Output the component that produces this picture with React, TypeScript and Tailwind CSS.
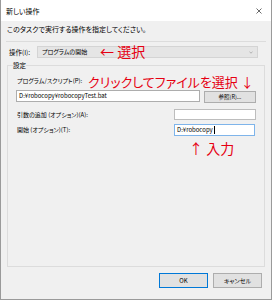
import React from 'react';

const font = "font-['Noto_Sans_CJK_JP','Noto_Sans',sans-serif] [font-feature-settings:'palt']";

const App: React.FC = () => {
  return (
    <div className={`relative w-[272px] h-[300px] bg-[#f0f0f0] border-x border-b border-[#9a9a9a] flex flex-col text-black ${font}`}>
      {/* title bar */}
      <div className="h-[21px] bg-white flex items-center justify-between pl-[5px] pr-[9px] shrink-0">
        <span className="text-[7px] leading-[10px]">新しい操作</span>
        <svg width="6" height="6" viewBox="0 0 6 6" className="text-[#444]">
          <path d="M0.5 0.5 L5.5 5.5 M5.5 0.5 L0.5 5.5" stroke="currentColor" strokeWidth="0.8" />
        </svg>
      </div>

      <p className="pt-[3px] pl-[6px] text-[7px] leading-[10px]">このタスクで実行する操作を指定してください。</p>
      <div className="mt-[7px] mx-[5px] h-px bg-[#dcdcdc]" />

      {/* action row */}
      <div className="mt-[4px] flex items-center pl-[8px] pr-[13px]">
        <span className="w-[28px] text-[6.5px] leading-[10px]">操作(I):</span>
        <div className="flex-1 h-[12px] bg-[#e5e5e5] border border-[#d4d4d4] flex items-center justify-between pl-[4px] pr-[4px]">
          <span className="text-[6px] leading-[10px]">プログラムの開始</span>
          <svg width="4" height="3" viewBox="0 0 4 3">
            <path d="M0.5 0.8 L2 2.2 L3.5 0.8" stroke="#9a9a9a" strokeWidth="0.7" fill="none" />
          </svg>
        </div>
      </div>

      {/* settings group */}
      <fieldset className="mt-[2px] mx-[6px] h-[207px] border border-[#dcdcdc] shrink-0">
        <legend className="ml-[5px] text-[6.5px] leading-[10px]">設定</legend>

        <div className="mt-[6px] pl-[9px] text-[6px] leading-[10px]">プログラム/スクリプト(P):</div>
        <div className="mt-[3px] flex items-center pl-[8px] gap-[4px]">
          <div className="w-[184px] h-[12px] bg-white border border-[#adadad] flex items-center pl-[2px] text-[6px] leading-[10px]">
            D:¥robocopy¥robocopyTest.bat
          </div>
          <div className="mt-[2px] w-[52px] h-[12px] bg-[#e1e1e1] border border-[#adadad] flex items-center justify-center text-[5.5px] leading-[10px]">
            参照(R)...
          </div>
        </div>

        <div className="mt-[6px] flex items-center pl-[9px] pr-[8px] justify-between">
          <span className="text-[6px] leading-[10px]">引数の追加 (オプション)(A):</span>
          <div className="w-[82px] h-[11px] bg-white border border-[#bdbdbd]" />
        </div>

        <div className="mt-[4px] flex items-center pl-[9px] pr-[9px] justify-between">
          <span className="text-[6px] leading-[10px]">開始 (オプション)(T):</span>
          <div className="w-[81px] h-[12px] bg-white border border-[#7eb4ea] flex items-center pl-[2px] text-[6px] leading-[10px]">
            D:¥robocopy
            <span className="ml-px w-px h-[8px] bg-black" />
          </div>
        </div>
      </fieldset>

      {/* dialog buttons */}
      <div className="mt-[6px] flex justify-end gap-[5px] pr-[9px]">
        <div className="w-[49px] h-[15px] bg-[#e1e1e1] border border-[#0078d7] flex items-center justify-center text-[6px] leading-[10px]">
          OK
        </div>
        <div className="w-[49px] h-[15px] bg-[#e1e1e1] border border-[#adadad] flex items-center justify-center text-[6px] leading-[10px]">
          キャンセル
        </div>
      </div>

      {/* red annotations */}
      <div className="absolute left-[99px] top-[42px] text-[#e60012] text-[14px] leading-[18px] whitespace-nowrap">
        ← 選択
      </div>
      <div className="absolute left-[87px] top-[73px] text-[#e60012] text-[13px] leading-[18px] whitespace-nowrap">
        クリックしてファイルを選択 ↓
      </div>
      <div className="absolute left-[188px] top-[139px] text-[#e60012] text-[14px] leading-[18px] whitespace-nowrap">
        ↑ 入力
      </div>
    </div>
  );
};

export default App;
